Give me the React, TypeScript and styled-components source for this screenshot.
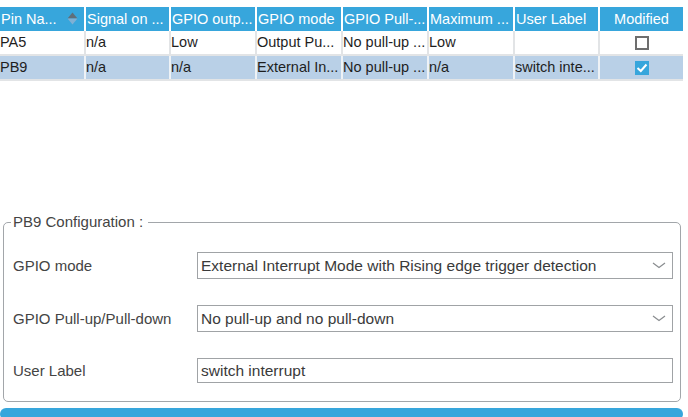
import React from "react"
import styled, { createGlobalStyle } from "styled-components"

const GlobalStyle = createGlobalStyle`
  html, body {
    margin: 0;
    padding: 0;
    background: #ffffff;
  }
  body {
    font-family: "Liberation Sans", Arial, sans-serif;
    font-size: 15px;
  }
`

const COLUMNS = "84px 83px 84px 84px 84px 84px 83px 83px"

const Page = styled.div`
  width: 688px;
  height: 417px;
  overflow: hidden;
  display: flex;
  flex-direction: column;
`

const TableArea = styled.div`
  height: 214px;
  flex-shrink: 0;
  padding-top: 7px;
  box-sizing: border-box;
  font-size: 14.5px;
`

const HeaderRow = styled.div`
  display: grid;
  grid-template-columns: ${COLUMNS};
  column-gap: 2px;
  background: #ffffff;
  width: 683px;
`

const HeaderCell = styled.div<{ $center?: boolean }>`
  position: relative;
  height: 24px;
  line-height: 24px;
  background: #37a6dc;
  color: #ffffff;
  padding-left: ${(p) => (p.$center ? 0 : 1)}px;
  white-space: nowrap;
  overflow: hidden;
  text-align: ${(p) => (p.$center ? "center" : "left")};
`

const SortMark = styled.svg`
  position: absolute;
  right: 6px;
  top: 5px;
`

const BodyRow = styled.div<{ $selected?: boolean }>`
  display: grid;
  grid-template-columns: ${COLUMNS};
  column-gap: 2px;
  width: 683px;
  background: ${(p) => (p.$selected ? "#eef2f6" : "#e2e4e6")};
  border-bottom: 2px solid #e2e4e6;
`

const Cell = styled.div<{ $selected?: boolean; $center?: boolean }>`
  height: 23px;
  line-height: 23px;
  background: ${(p) => (p.$selected ? "#b9d0e7" : "#ffffff")};
  color: #1e1e1e;
  padding-left: 0;
  white-space: nowrap;
  overflow: hidden;
  display: ${(p) => (p.$center ? "flex" : "block")};
  align-items: center;
  justify-content: center;
`

const Box = styled.span<{ $checked?: boolean }>`
  width: 14px;
  height: 14px;
  box-sizing: border-box;
  border: ${(p) => (p.$checked ? "none" : "2px solid #6e6e6e")};
  background: ${(p) => (p.$checked ? "#37a6dc" : "#ffffff")};
  display: flex;
  align-items: center;
  justify-content: center;
`

const Fieldset = styled.fieldset`
  margin: 0 0 0 3px;
  width: 678px;
  height: 188px;
  flex-shrink: 0;
  box-sizing: border-box;
  border: 1px solid #a2a6aa;
  border-radius: 5px;
  padding: 22px 7px 0 9px;
  min-width: 0;
`

const Legend = styled.legend`
  color: #444444;
  font-size: 15px;
  line-height: 16px;
  padding: 0 5px 0 2px;
  margin-left: -2px;
`

const Form = styled.div`
  display: grid;
  grid-template-columns: 184px 476px;
  row-gap: 26px;
  align-items: center;
`

const Label = styled.div`
  color: #444444;
  font-size: 15px;
`

const Control = styled.div<{ $tall?: boolean }>`
  height: ${(p) => (p.$tall ? 27 : 25)}px;
  box-sizing: border-box;
  border: 1px solid #a0a3a6;
  background: #ffffff;
  color: #3a3a3a;
  font-size: 15.5px;
  padding: 0 6px 0 3px;
  display: flex;
  align-items: center;
  justify-content: space-between;
  white-space: nowrap;
`

const BottomBar = styled.div`
  margin-top: 6px;
  width: 683px;
  height: 12px;
  border-radius: 6px;
  background: #37a6dc;
  flex-shrink: 0;
`

const Chevron = () => (
  <svg width="14" height="7" viewBox="0 0 14 7">
    <path d="M1 1 L7 5.5 L13 1" fill="none" stroke="#8a8d90" strokeWidth="1.2" />
  </svg>
)

const Check = () => (
  <svg width="12" height="10" viewBox="0 0 12 10">
    <path d="M1.5 5 L4.8 8 L10.5 1.5" fill="none" stroke="#ffffff" strokeWidth="2" />
  </svg>
)

const headers = [
  "Pin Na...",
  "Signal on ...",
  "GPIO outp...",
  "GPIO mode",
  "GPIO Pull-...",
  "Maximum ...",
  "User Label",
  "Modified",
]

const pins = [
  { cells: ["PA5", "n/a", "Low", "Output Pu...", "No pull-up ...", "Low", ""], modified: false, selected: false },
  { cells: ["PB9", "n/a", "n/a", "External In...", "No pull-up ...", "n/a", "switch inte..."], modified: true, selected: true },
]

export default function App() {
  return (
    <Page>
      <GlobalStyle />
      <TableArea>
        <HeaderRow>
          {headers.map((h, i) => (
            <HeaderCell key={h} $center={i === headers.length - 1}>
              {h}
              {i === 0 && (
                <SortMark width="11" height="13" viewBox="0 0 11 13">
                  <path d="M5.5 0.5 L10.5 6.5 L0.5 6.5 Z" fill="#5f6f7a" />
                  <path d="M0.5 6.5 L10.5 6.5 L5.5 12.5 Z" fill="#7fb0d4" />
                </SortMark>
              )}
            </HeaderCell>
          ))}
        </HeaderRow>
        {pins.map((row) => (
          <BodyRow key={row.cells[0]} $selected={row.selected}>
            {row.cells.map((c, i) => (
              <Cell key={i} $selected={row.selected}>
                {c}
              </Cell>
            ))}
            <Cell $selected={row.selected} $center>
              <Box $checked={row.modified}>{row.modified && <Check />}</Box>
            </Cell>
          </BodyRow>
        ))}
      </TableArea>

      <Fieldset>
        <Legend>PB9 Configuration :</Legend>
        <Form>
          <Label>GPIO mode</Label>
          <Control $tall>
            External Interrupt Mode with Rising edge trigger detection
            <Chevron />
          </Control>
          <Label>GPIO Pull-up/Pull-down</Label>
          <Control $tall>
            No pull-up and no pull-down
            <Chevron />
          </Control>
          <Label>User Label</Label>
          <Control>switch interrupt</Control>
        </Form>
      </Fieldset>

      <BottomBar />
    </Page>
  )
}
